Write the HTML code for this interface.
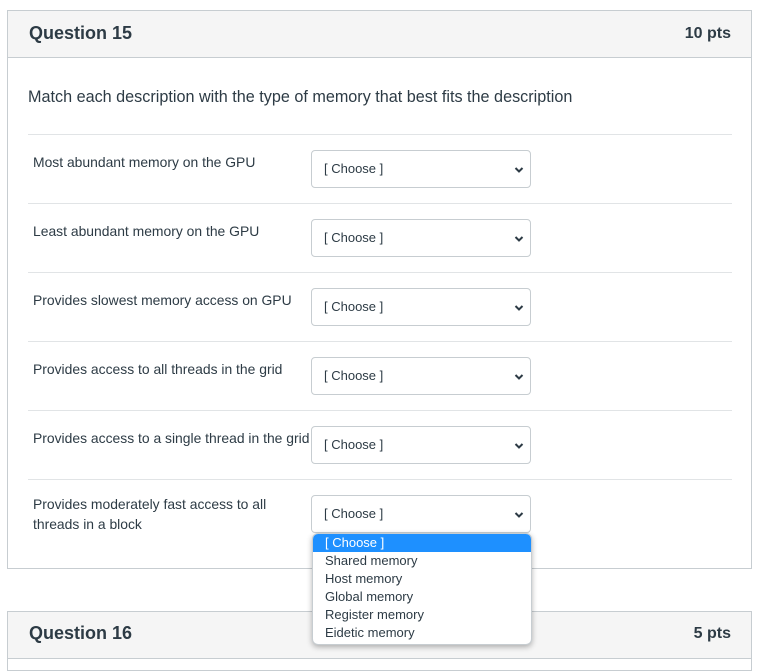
<!DOCTYPE html>
<html><head><style>
body{margin:0;width:763px;height:641px;overflow:hidden;background:#fff;font-family:"Liberation Sans",sans-serif;color:#2d3b45;position:relative}
.box{position:absolute;left:7px;width:745px;border:1px solid #c7cdd1;box-sizing:border-box}
.hdr{height:46px;background:#f5f5f5;border-bottom:1px solid #c7cdd1;position:relative}
.hdr .t{position:absolute;left:21px;top:12px;font-size:18px;font-weight:bold}
.hdr .p{position:absolute;right:20px;top:14px;font-size:16px;font-weight:bold}
.q{position:absolute;left:28px;top:88px;font-size:16.2px}
.sep{position:absolute;left:28px;width:704px;height:1px;background:#e1e4e6}
.lab{position:absolute;left:33px;font-size:13.9px;line-height:20px;width:290px;white-space:nowrap}
.sel{position:absolute;left:311px;width:220px;height:38px;border:1px solid #c7cdd1;border-radius:4px;box-sizing:border-box;font-size:13px;background:#fff}
.sel span{position:absolute;left:12px;top:10px}
.sel svg{position:absolute;right:6px;top:15px}
.dd{position:absolute;left:312px;top:533px;width:218px;height:110px;background:#fff;border:1px solid #c7cdd1;border-radius:6px;box-shadow:0 2px 6px rgba(0,0,0,.3);font-size:13px;overflow:hidden}
.dd div{height:18px;line-height:18px;padding-left:12px;color:#2d3b45}
.dd .h{background:#1e90ff;color:#fff}
</style></head><body>
<div class="box" style="top:10px;height:559px">
<div class="hdr"><span class="t">Question 15</span><span class="p">10 pts</span></div>
</div>
<div class="q">Match each description with the type of memory that best fits the description</div>
<div class="sep" style="top:134px"></div>
<div class="sep" style="top:203px"></div>
<div class="sep" style="top:272px"></div>
<div class="sep" style="top:341px"></div>
<div class="sep" style="top:410px"></div>
<div class="sep" style="top:479px"></div>
<div class="lab" style="top:152px">Most abundant memory on the GPU</div>
<div class="lab" style="top:221px">Least abundant memory on the GPU</div>
<div class="lab" style="top:290px">Provides slowest memory access on GPU</div>
<div class="lab" style="top:359px">Provides access to all threads in the grid</div>
<div class="lab" style="top:428px">Provides access to a single thread in the grid</div>
<div class="lab" style="top:494px">Provides moderately fast access to all<br>threads in a block</div>
<div class="sel" style="top:150px"><span>[ Choose ]</span><svg width="10" height="8" viewBox="0 0 10 8"><path d="M1.5 2l3.5 3.5L8.5 2" fill="none" stroke="#2d3b45" stroke-width="2"/></svg></div>
<div class="sel" style="top:219px"><span>[ Choose ]</span><svg width="10" height="8" viewBox="0 0 10 8"><path d="M1.5 2l3.5 3.5L8.5 2" fill="none" stroke="#2d3b45" stroke-width="2"/></svg></div>
<div class="sel" style="top:288px"><span>[ Choose ]</span><svg width="10" height="8" viewBox="0 0 10 8"><path d="M1.5 2l3.5 3.5L8.5 2" fill="none" stroke="#2d3b45" stroke-width="2"/></svg></div>
<div class="sel" style="top:357px"><span>[ Choose ]</span><svg width="10" height="8" viewBox="0 0 10 8"><path d="M1.5 2l3.5 3.5L8.5 2" fill="none" stroke="#2d3b45" stroke-width="2"/></svg></div>
<div class="sel" style="top:426px"><span>[ Choose ]</span><svg width="10" height="8" viewBox="0 0 10 8"><path d="M1.5 2l3.5 3.5L8.5 2" fill="none" stroke="#2d3b45" stroke-width="2"/></svg></div>
<div class="sel" style="top:495px"><span>[ Choose ]</span><svg width="10" height="8" viewBox="0 0 10 8"><path d="M1.5 2l3.5 3.5L8.5 2" fill="none" stroke="#2d3b45" stroke-width="2"/></svg></div>
<div class="box" style="top:611px;height:60px">
<div class="hdr"><span class="t" style="top:11px">Question 16</span><span class="p" style="top:13px">5 pts</span></div>
</div>
<div class="dd">
<div class="h">[ Choose ]</div><div>Shared memory</div><div>Host memory</div><div>Global memory</div><div>Register memory</div><div>Eidetic memory</div>
</div>
</body></html>
